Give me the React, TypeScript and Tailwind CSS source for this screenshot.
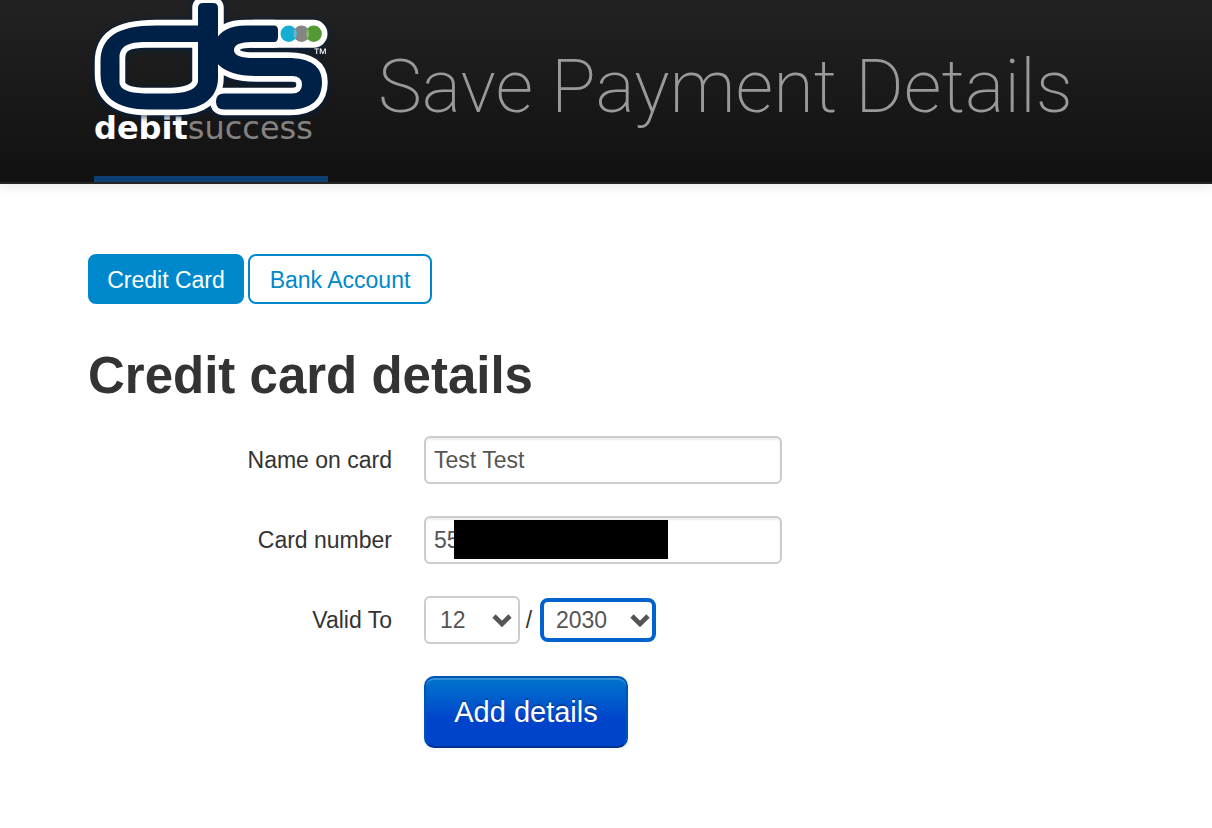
import { useState } from "react";
import type { ReactNode } from "react";

const months = ["01", "02", "03", "04", "05", "06", "07", "08", "09", "10", "11", "12"];
const years = ["2026", "2027", "2028", "2029", "2030", "2031", "2032"];

const D_PATH =
  "M104 25.5H62C22 25.5 6.5 38 6.5 62V74C6.5 98 24 109.5 54 109.5H84C108 109.5 124 98 124 78V8Q124 3 119 3H109Q104 3 104 8Z" +
  "M104 42V82C102 90 90 93.5 76 93.5H54C36 93.5 25.5 90 25.5 82V58C25.5 46 34 42 52 42Z";
const S_PATH =
  "M180 25.5H152C136 25.5 126 31 122 40V62C130 72 144 76 162 76H198Q208 76 208 84.5Q208 93.5 198 93.5H130Q122 93.5 122 101.5Q122 109.5 130 109.5H196C218 109.5 228 99 228 82C228 66 216 58 194 58H160Q140 58 140 50Q140 42 158 42H180Q184 42 184 37V30Q184 25.5 180 25.5Z";

function Logo() {
  return (
    <svg viewBox="0 0 234 116" className="block w-full shrink-0 overflow-visible drop-shadow-[0_1px_3px_#002147]" aria-hidden="true">
      <g fill="none" stroke="#fff" strokeWidth="11.5" strokeLinejoin="round">
        <path d={D_PATH} />
        <path d={S_PATH} />
      </g>
      <rect x="146" y="19.8" width="87.5" height="28" rx="14" fill="#fff" />
      <path d={D_PATH} fill="#002147" fillRule="evenodd" />
      <path d={S_PATH} fill="#002147" />
      <circle cx="207.5" cy="33.7" r="8.2" fill="#868484" />
      <circle cx="194.7" cy="33.7" r="8.2" fill="#16add3" />
      <circle cx="219.7" cy="33.7" r="8.2" fill="#539a35" />
      <path d="M201 28.5Q204.5 33.7 201 39Q198 33.7 201 28.5Z" fill="#6fb6c6" />
      <path d="M213.5 28.5Q217 33.7 213.5 39Q210.5 33.7 213.5 28.5Z" fill="#8fb07e" />
      <text x="219" y="58" fontSize="14" fill="#fff" fontFamily="Liberation Sans, sans-serif">
        ™
      </text>
    </svg>
  );
}

function Chevron({ className }: { className: string }) {
  return (
    <svg
      viewBox="0 0 20 14"
      aria-hidden="true"
      className={`pointer-events-none absolute top-1/2 h-3.5 w-5 -translate-y-1/2 ${className}`}
    >
      <path d="M2 3L10 11L18 3" fill="none" stroke="#555" strokeWidth="4.6" />
    </svg>
  );
}

function Row({ id, label, children }: { id: string; label: string; children: ReactNode }) {
  return (
    <div className="flex h-12 items-center gap-8">
      <label htmlFor={id} className="w-76 shrink-0 text-right">
        {label}
      </label>
      {children}
    </div>
  );
}

const inputClass =
  "h-12 w-[358px] rounded-md border-2 border-[#ccc] bg-white px-2 text-[#555] shadow-[inset_0_2px_2px_rgba(0,0,0,0.075)] outline-none";

export default function App() {
  const [tab, setTab] = useState("card");
  const [name, setName] = useState("Test Test");
  const [card, setCard] = useState("55");
  const [month, setMonth] = useState("12");
  const [year, setYear] = useState("2030");
  const on = "bg-[#0088cc] text-white";
  const off = "bg-white text-[#0088cc]";

  return (
    <div className="min-h-screen bg-white font-['Liberation_Sans',Arial,sans-serif] text-[23px] leading-8 text-[#333]">
      <header className="flex h-46 border-b-2 border-[#252525] bg-linear-to-b from-[#222] to-[#111] pl-[94px] shadow-[0_2px_12px_rgba(0,0,0,0.1)]">
        <a href="#" aria-label="debitsuccess" className="flex w-[234px] shrink-0 flex-col border-b-6 border-[#0d3f73]">
          <Logo />
          <span className="font-['DejaVu_Sans',sans-serif] text-[32px] leading-6 text-[#858381]">
            <b className="text-white">debit</b>success
          </span>
        </a>
        <h1 className="flex items-center pb-2 pl-[50px] font-['Roboto',sans-serif] text-[74px] font-extralight whitespace-nowrap text-[#999]">
          Save Payment Details
        </h1>
      </header>

      <main className="px-22 pt-[70px]">
        <div className="flex gap-1">
          <button type="button" onClick={() => setTab("card")} className={`h-[50px] w-39 rounded-lg border-2 border-[#0088cc] pt-0.5 ${tab === "card" ? on : off}`}>
            Credit Card
          </button>
          <button type="button" onClick={() => setTab("bank")} className={`h-[50px] w-46 rounded-lg border-2 border-[#0088cc] pt-0.5 ${tab === "bank" ? on : off}`}>
            Bank Account
          </button>
        </div>

        <h2 className="mt-8 text-[51px] leading-20 font-bold">Credit card details</h2>

        <form className="mt-5 flex flex-col gap-8" onSubmit={(e) => e.preventDefault()}>
          <Row id="name" label="Name on card">
            <input id="name" value={name} onChange={(e) => setName(e.target.value)} className={inputClass} />
          </Row>
          <Row id="number" label="Card number">
            <div className="relative">
              <input id="number" value={card} onChange={(e) => setCard(e.target.value)} className={inputClass} />
              <div className="absolute top-1 left-[30px] h-[39px] w-[214px] bg-black" />
            </div>
          </Row>
          <Row id="month" label="Valid To">
            <div className="flex items-center">
              <div className="relative">
                <select id="month" value={month} onChange={(e) => setMonth(e.target.value)} className="block h-12 w-24 appearance-none rounded-md border-2 border-[#ccc] bg-white pl-3.5 text-[#555] outline-none">
                  {months.map((m) => (
                    <option key={m}>{m}</option>
                  ))}
                </select>
                <Chevron className="right-2" />
              </div>
              <span className="w-5 pr-0.5 text-center">/</span>
              <div className="relative">
                <select aria-label="Year" value={year} onChange={(e) => setYear(e.target.value)} className="block h-11 w-[116px] appearance-none rounded-lg border-4 border-[#0062cc] bg-white pl-3 text-[#555] outline-none">
                  {years.map((y) => (
                    <option key={y}>{y}</option>
                  ))}
                </select>
                <Chevron className="right-1.5" />
              </div>
            </div>
          </Row>
          <button
            type="submit"
            className="ml-84 h-18 w-51 rounded-[10px] border-2 border-[#0055b3] border-b-[#002f8c] bg-linear-to-b from-[#0074cc] to-[#0044cc] to-60% text-[29px] text-white shadow-[inset_0_2px_0_rgba(255,255,255,0.2),0_2px_4px_rgba(0,0,0,0.05)] [text-shadow:0_-2px_0_rgba(0,0,0,0.25)]"
          >
            Add details
          </button>
        </form>
      </main>
    </div>
  );
}
